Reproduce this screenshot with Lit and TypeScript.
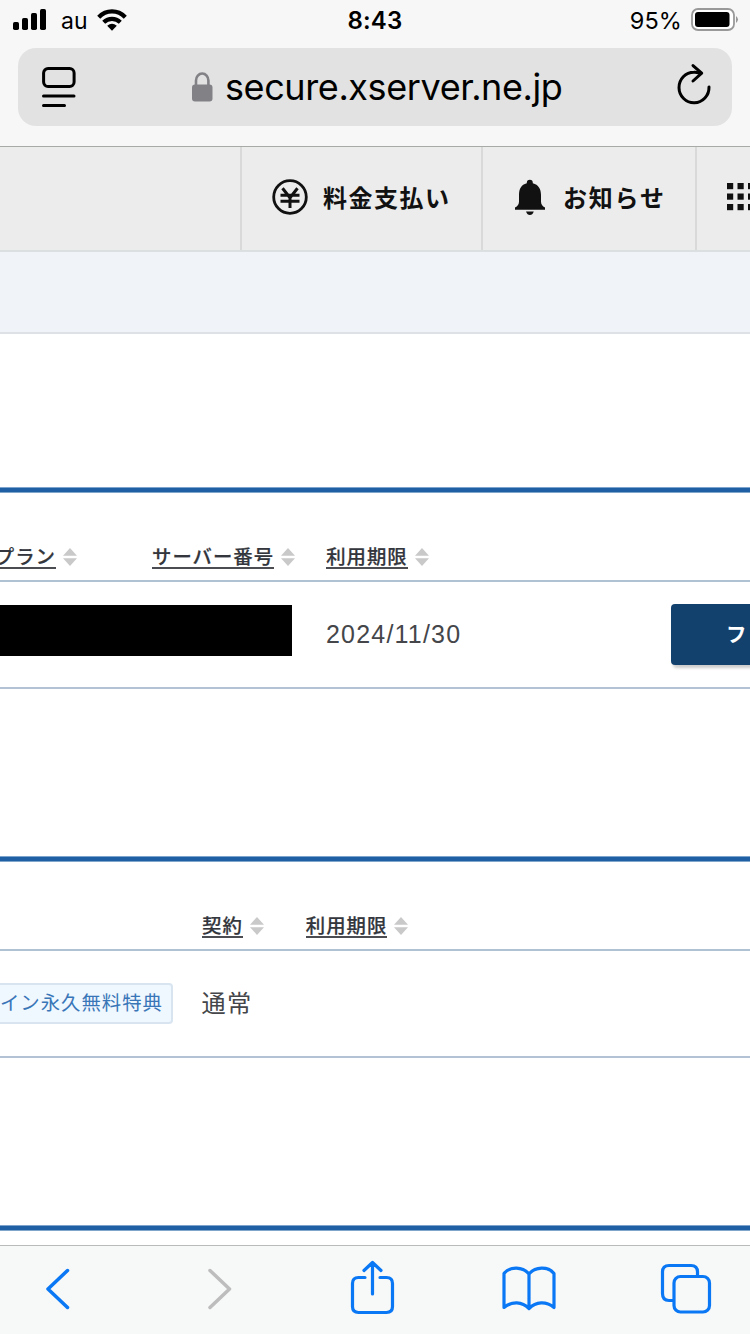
import { LitElement, html, css, svg } from "lit";
import { customElement, property } from "lit/decorators.js";

@customElement("sort-header")
class SortHeader extends LitElement {
  @property() label = "";
  static styles = css`
    :host { display: flex; align-items: center; flex: none; justify-content: flex-end; }
    .label {
      flex: none; height: 24px; line-height: 21px; box-sizing: border-box;
      font-size: 19.4px; font-weight: 500; letter-spacing: 1px; color: #33363c;
      border-bottom: 2px solid #4a4c52; -webkit-text-stroke: 0.2px #33363c;
    }
    svg { flex: none; display: block; margin-left: 6px; }
  `;
  render() {
    return html`<span class="label">${this.label}</span>
      <svg width="16" height="20" viewBox="0 0 16 20" fill="#c9c9c9">
        <path d="M8 1L15 8.7H1z" /><path d="M1 11.2H15L8 18.9z" />
      </svg>`;
  }
}

@customElement("app-root")
class AppRoot extends LitElement {
  static styles = css`
    :host {
      display: flex; flex-direction: column; width: 750px; height: 1334px; overflow: hidden;
      background: #fff; font-family: Inter, "Noto Sans CJK JP", sans-serif; color: #000;
    }
    svg { display: block; flex: none; }
    .chrome { flex: none; height: 147px; box-sizing: border-box; background: #f7f7f7; border-bottom: 1px solid #a8aaa8; }
    .status { height: 48px; box-sizing: border-box; display: grid; grid-template-columns: 1fr auto 1fr; align-items: center; padding: 0 11px 7px 13px; font-size: 24px; }
    .carrier, .power { display: flex; align-items: center; }
    .status svg { margin-bottom: 2px; }
    .carrier { gap: 9px; }
    .carrier span { font-size: 23px; width: 27px; margin-left: 5px; }
    .power { justify-content: flex-end; gap: 9px; font-size: 23.5px; letter-spacing: 0.1px; }
    .clock { font-weight: 600; font-size: 24px; letter-spacing: 0.2px; margin-right: 2px; }
    .address { margin: 0 18px; height: 78px; box-sizing: border-box; border-radius: 18px; background: #e2e2e2; display: flex; align-items: center; justify-content: space-between; padding: 0 20px 0 22px; }
    .site { display: flex; align-items: center; gap: 12.5px; font-size: 36px; letter-spacing: -0.4px; }
    .reload { margin-bottom: 6px; }
    .nav { flex: none; height: 105px; box-sizing: border-box; background: #ececec; border-bottom: 2px solid #dcdfe2; display: flex; }
    .blank { width: 240px; flex: none; }
    .item { flex: none; box-sizing: border-box; border-left: 2px solid #d9d9d9; display: flex; align-items: center; color: #111; font: 700 24px "Noto Sans CJK JP", sans-serif; letter-spacing: 1.5px; padding-bottom: 3px; white-space: nowrap; }
    .item span { margin-bottom: 2px; }
    .pay { width: 241px; padding-left: 29px; gap: 14px; }
    .news { width: 214px; padding-left: 30.5px; gap: 17.5px; letter-spacing: 1.8px; }
    .apps { width: 100px; padding-left: 30px; }
    .band { flex: none; height: 82px; box-sizing: border-box; background: #f0f4f8; border-bottom: 2px solid #dee2e7; }
    .page { flex: 1; min-height: 0; overflow: hidden; padding-top: 153px; font-family: "Noto Sans CJK JP", sans-serif; }
    .table { height: 369px; }
    .table::before { content: ""; display: block; height: 6px; background: linear-gradient(#7ca4cc 1px, #1f5fa3 1px 5px, #80a6cc 5px); }
    .head { height: 89px; box-sizing: border-box; border-bottom: 2px solid #afc2d3; display: flex; align-items: flex-end; padding-bottom: 11px; }
    .plan { width: 78px; }
    .server { margin-left: 74px; }
    .due { margin-left: 30px; }
    .contract { margin-left: 202px; }
    .due2 { margin-left: 41px; }
    .row { height: 107px; box-sizing: border-box; border-bottom: 2px solid #b3c3d5; display: flex; align-items: center; overflow: hidden; color: #44464a; }
    .mask { flex: none; width: 292px; height: 51px; background: #000; margin-bottom: 8px; }
    .date { flex: none; width: 345px; margin-left: 34px; font: 25px "Liberation Sans", sans-serif; letter-spacing: 1.2px; }
    .action { flex: none; width: 160px; height: 61px; box-sizing: border-box; padding-left: 55px; border-radius: 4px; background: #13416e; color: #fff; font-size: 20.5px; font-weight: 700; line-height: 58px; box-shadow: 2px 3px 3px #0003; }
    .badge { flex: none; box-sizing: border-box; width: 173px; height: 41px; border: 2px solid #d8e5f1; border-left: 0; border-radius: 0 4px 4px 0; background: #eff7ff; color: #3976b8; font-size: 19.4px; letter-spacing: 0.97px; line-height: 33px; white-space: nowrap; }
    .state { margin: 0 0 5px 28.5px; font-size: 24.2px; letter-spacing: 1.2px; }
    .toolbar { flex: none; height: 89px; box-sizing: border-box; border-top: 1px solid #b9bbbb; background: #f7f8f8; display: flex; padding: 13px 0 0 43px; }
    .forward { margin-left: 132px; }
    .share { margin-left: 114px; }
    .book { margin-left: 106px; }
    .tabs { margin-left: 102px; }
  `;
  render() {
    return html`
      <header class="chrome">
        <div class="status">
          <div class="carrier">
            <svg width="34" height="22" viewBox="0 0 34 22"><rect y="13" width="6" height="8" rx="1.7"/><rect x="9" y="9" width="6" height="12" rx="1.7"/><rect x="18" y="4" width="6" height="17" rx="1.7"/><rect x="27" y="0" width="6" height="21" rx="1.7"/></svg>
            <span>au</span>
            <svg width="30" height="22" viewBox="0 0 30 22" fill="none" stroke="#000" stroke-width="4.2"><path d="M1.7 8.2C9.2 .5 20.8 .5 28.3 8.2"/><path d="M6.7 13.3C11.4 8.7 18.6 8.7 23.3 13.3"/><path d="M10.2 16.8Q15 12.7 19.8 16.8L15 21.7z" fill="#000" stroke="none"/></svg>
          </div>
          <div class="clock">8:43</div>
          <div class="power">
            <span>95%</span>
            <svg width="48" height="23" viewBox="0 0 48 23"><rect x="1" y="1" width="42" height="21" rx="6" fill="#fff" stroke="#999" stroke-width="1.8"/><rect x="4" y="4" width="34.5" height="15" rx="3"/><path d="M45 8Q49 11.5 45 15z" fill="#999"/></svg>
          </div>
        </div>
        <div class="address">
          <svg width="38" height="44" viewBox="0 0 38 44" fill="none" stroke="#000" stroke-width="3" stroke-linecap="round"><rect x="3.6" y="3.6" width="30.5" height="18" rx="4.5"/><path d="M3.5 31H34M3.5 40.5H24.5"/></svg>
          <div class="site">
            <svg width="21" height="30" viewBox="0 0 21 30"><rect y="12.5" width="20.5" height="17" rx="3" fill="#828186"/><path d="M4 14V8.5a6.2 7 0 0 1 12.4 0V14" fill="none" stroke="#828186" stroke-width="2.6"/></svg>
            <span>secure.xserver.ne.jp</span>
          </div>
          <svg class="reload" width="36" height="44" viewBox="0 0 36 44" fill="none" stroke="#000" stroke-width="3" stroke-linecap="round" stroke-linejoin="round"><path d="M23.5 11.1Q20.5 10 17.9 10.2A15 15.3 0 1 0 33 25"/><path d="M17 3.6L25.7 11.2L17 19"/></svg>
        </div>
      </header>
      <nav class="nav">
        <div class="blank"></div>
        <div class="item pay">
          <svg width="38" height="38" viewBox="0 0 38 38" fill="none" stroke="#111"><circle cx="19" cy="19" r="16.3" stroke-width="2.8"/><path d="M11.5 10.3L19 19.8L26.5 10.3M19 19V30M9.5 17.2H28.5M9.5 23.2H28.5" stroke-width="3"/></svg>
          <span>料金支払い</span>
        </div>
        <div class="item news">
          <svg width="32" height="37" viewBox="0 0 32 37" fill="#111"><path d="M12.8 4.2V3.8a3 3 0 0 1 6 0V4.2C24.5 5.6 27 10 27 16V22.5Q27 26.5 31 28.5V30.8H1V28.5Q5 26.5 5 22.5V16C5 10 7.2 5.6 12.8 4.2zM12 32.5H19.8Q18.5 36 15.9 36T12 32.5z"/></svg>
          <span>お知らせ</span>
        </div>
        <div class="item apps">
          <svg width="28" height="28" viewBox="0 0 28 28" fill="#111">${[0, 10.5, 21].map((y) => [0, 10.5, 21].map((x) => svg`<rect x=${x} y=${y} width="6.2" height="6.2"/>`))}</svg>
        </div>
      </nav>
      <div class="band"></div>
      <main class="page">
        <section class="table">
          <div class="head">
            <sort-header class="plan" label="プラン"></sort-header>
            <sort-header class="server" label="サーバー番号"></sort-header>
            <sort-header class="due" label="利用期限"></sort-header>
          </div>
          <div class="row"><div class="mask"></div><div class="date">2024/11/30</div><div class="action">フ</div></div>
        </section>
        <section class="table">
          <div class="head">
            <sort-header class="contract" label="契約"></sort-header>
            <sort-header class="due2" label="利用期限"></sort-header>
          </div>
          <div class="row"><div class="badge">イン永久無料特典</div><div class="state">通常</div></div>
        </section>
        <section class="table"></section>
      </main>
      <footer class="toolbar">
        <svg width="30" height="60" viewBox="0 0 30 60" fill="none" stroke="#0a78f5" stroke-width="3.5" stroke-linecap="round" stroke-linejoin="round"><path d="M24.5 11.5L5 30L24.5 48.5"/></svg>
        <svg class="forward" width="30" height="60" viewBox="0 0 30 60" fill="none" stroke="#bdbdbd" stroke-width="3.5" stroke-linecap="round" stroke-linejoin="round"><path d="M5 11.5L24.5 30L5 48.5"/></svg>
        <svg class="share" width="46" height="60" viewBox="0 0 46 60" fill="none" stroke="#0a78f5" stroke-width="3.2" stroke-linecap="round" stroke-linejoin="round"><path d="M16 18.5H9.5Q3.5 18.5 3.5 24.5V47.5Q3.5 53.5 9.5 53.5H37.5Q43.5 53.5 43.5 47.5V24.5Q43.5 18.5 37.5 18.5H31M23.5 35V3.5M15 11.5L23.5 3.5L32 11.5"/></svg>
        <svg class="book" width="56" height="60" viewBox="0 0 56 60" fill="none" stroke="#0a78f5" stroke-width="3.2" stroke-linejoin="round"><path d="M28 15C22 7.5 9 7 3 14.5V48.5C11 42 21 42.5 28 49.5C35 42.5 45 42 53 48.5V14.5C47 7 34 7.5 28 15V49.5"/></svg>
        <svg class="tabs" width="54" height="60" viewBox="0 0 54 60" fill="none" stroke="#0a78f5" stroke-width="3.2"><path d="M38.5 17V13Q38.5 6.5 32 6.5H10Q3.5 6.5 3.5 13V34.5Q3.5 41.5 10 41.5H14.5"/><rect x="15" y="17.5" width="35.5" height="35.5" rx="6.5"/></svg>
      </footer>
    `;
  }
}
